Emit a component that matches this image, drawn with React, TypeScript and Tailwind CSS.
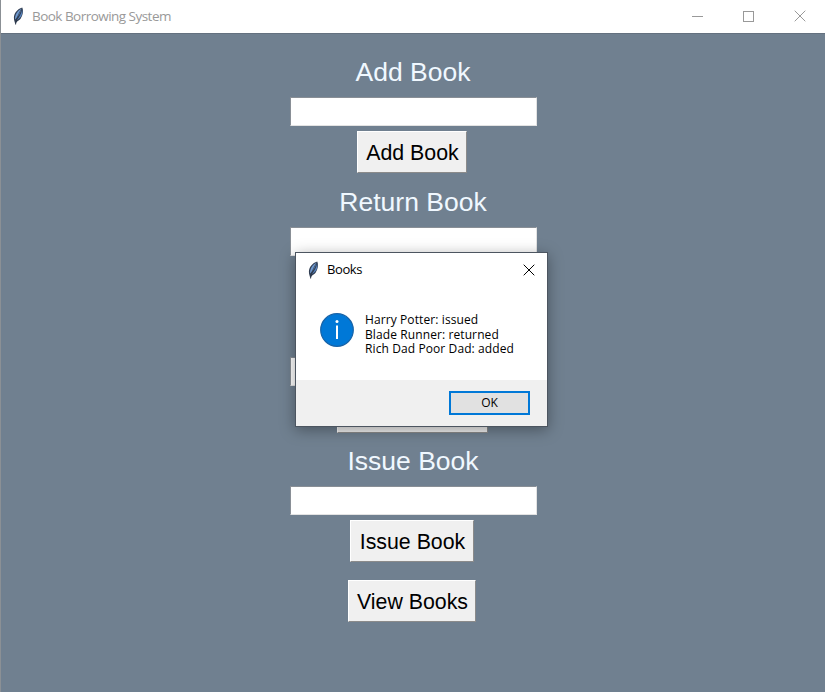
import React from 'react';

interface SectionProps {
  title: string;
  buttonWidth: string;
  covered?: boolean;
}

const FeatherIcon: React.FC = () => (
  <svg width="16" height="20" viewBox="0 0 16 20" fill="none">
    <path d="M5.4 18.8C5.2 16.6 3.8 15 3.9 11.6C4.1 7.4 7.4 3 12.2 1.6C13.8 4.6 12.8 9.4 10.6 12.8C9.4 14.6 7.8 14.8 6.5 16.2Z" fill="#303d52" />
    <path d="M5.2 13.4C4.4 9.8 7.4 4.6 11.6 2.6C10.8 6.6 8.2 10.8 5.2 13.4Z" fill="#6f99cf" />
    <path d="M6.8 14C9.8 10.8 11.5 7.2 12.1 3.6C13.2 8.2 10.8 12.6 6.8 14Z" fill="#5783bd" />
    <path d="M5.6 18.6C5.7 14.4 8.2 8.2 11.5 3" stroke="#2a3547" strokeWidth="0.6" />
  </svg>
);

const CloseIcon: React.FC = () => (
  <svg width="12" height="12" viewBox="0 0 12 12" fill="none" stroke="currentColor" strokeWidth="1">
    <path d="M0.7 0.7L11.3 11.3M11.3 0.7L0.7 11.3" />
  </svg>
);

const TkButton: React.FC<{ label?: string; width: string }> = ({ label, width }) => (
  <button
    className={`${width} mr-[2px] h-[42px] shrink-0 border border-t-white border-l-white border-r-[#8b8b8b] border-b-[#8b8b8b] bg-[#f0f0f0] pl-px pt-[2px] text-[21.33px] leading-[38px] text-black whitespace-nowrap`}
  >
    {label}
  </button>
);

const Section: React.FC<SectionProps> = ({ title, buttonWidth, covered }) => (
  <section className="flex h-[129.75px] flex-col items-center">
    <h2 className="h-[44px] shrink-0 text-[26.5px] leading-[39px] text-[#f0f8ff] whitespace-nowrap">{!covered && title}</h2>
    <input
      type="text"
      className="h-[29px] w-[247px] shrink-0 border border-t-[#898f96] border-l-[#898f96] border-r-[#e3e3e3] border-b-[#e3e3e3] bg-white outline-none"
    />
    <div className="h-[5px] shrink-0" />
    <TkButton label={covered ? undefined : title} width={buttonWidth} />
  </section>
);

// The third group sits behind the dialog
const sections: SectionProps[] = [
  { title: 'Add Book', buttonWidth: 'w-[110px]' },
  { title: 'Return Book', buttonWidth: 'w-[136px]' },
  { title: 'Remove Book', buttonWidth: 'w-[151px]', covered: true },
  { title: 'Issue Book', buttonWidth: 'w-[124px]' },
];

const books = [
  { name: 'Harry Potter', status: 'issued' },
  { name: 'Blade Runner', status: 'returned' },
  { name: 'Rich Dad Poor Dad', status: 'added' },
];

const BooksDialog: React.FC = () => (
  <div className="absolute left-[294px] top-[252px] flex h-[175px] w-[253px] flex-col border border-[#4c5560] bg-white font-['Open_Sans',sans-serif] text-black shadow-[0_3px_14px_0px_rgba(0,0,0,0.35)]">
    <header className="flex h-[34px] items-center pl-[9px] pr-[12px]">
      <FeatherIcon />
      <span className="ml-[6px] text-[13px] tracking-[-0.4px]">Books</span>
      <span className="ml-auto text-black">
        <CloseIcon />
      </span>
    </header>
    <div className="flex flex-1 pl-[24px] pt-[26px]">
      <svg width="34" height="34" viewBox="0 0 34 34" className="shrink-0">
        <circle cx="17" cy="17" r="16.3" fill="#0078d7" stroke="#1763a8" strokeWidth="1.2" />
        <circle cx="17" cy="8.5" r="1.5" fill="#fff" />
        <path d="M17 12.5V26" stroke="#fff" strokeWidth="2" />
      </svg>
      <ul className="ml-[11px] text-[12px] leading-[14.5px] tracking-[0.1px] whitespace-nowrap">
        {books.map((book) => (
          <li key={book.name}>{`${book.name}: ${book.status}`}</li>
        ))}
      </ul>
    </div>
    <footer className="flex h-[46px] items-center justify-end bg-[#f0f0f0] pr-[17px]">
      <button className="h-[24px] w-[81px] border-2 border-[#0078d7] bg-[#e1e1e1] text-[12px] leading-[20px]">OK</button>
    </footer>
  </div>
);

const App: React.FC = () => {
  return (
    <div className="relative flex h-[692px] w-[825px] flex-col overflow-hidden border-l border-[#8b9095] bg-[#708090] font-['Liberation_Sans',Arial,sans-serif]">
      <header className="flex h-[33px] shrink-0 items-center bg-white pb-px pl-[9px] pr-[19px] text-[#999999]">
        <FeatherIcon />
        <span className="ml-[6px] font-['Open_Sans',sans-serif] text-[13.5px] tracking-[-0.53px] whitespace-nowrap">
          Book Borrowing System
        </span>
        <div className="ml-auto flex items-center gap-[39px]">
          <svg width="12" height="12" viewBox="0 0 12 12" stroke="currentColor">
            <path d="M0 6.5H11" />
          </svg>
          <svg width="12" height="12" viewBox="0 0 12 12" fill="none" stroke="currentColor">
            <rect x="0.5" y="1.5" width="10" height="10" />
          </svg>
          <CloseIcon />
        </div>
      </header>
      <main className="flex flex-1 flex-col items-center border-t border-[#64717f] pt-[19px]">
        {sections.map((section) => (
          <Section key={section.title} {...section} />
        ))}
        <div className="h-[8px]" />
        <TkButton label="View Books" width="w-[128px]" />
      </main>
      <BooksDialog />
    </div>
  );
};

export default App;
